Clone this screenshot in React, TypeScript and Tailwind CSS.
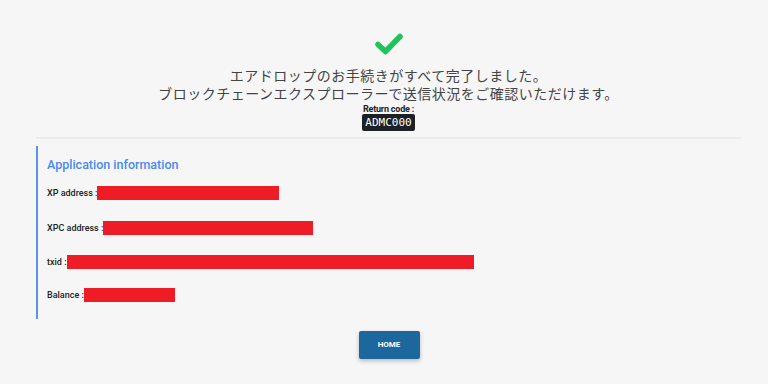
export default function App() {
    const rows = [
        { label: "XP address :", bar: "w-[182px]", gap: "mb-[21px]" },
        { label: "XPC address :", bar: "w-[210px]", gap: "mb-[20px]" },
        { label: "txid :", bar: "w-[407px]", gap: "mb-[19px]" },
        { label: "Balance :", bar: "w-[91px]", gap: "mb-0" },
    ];

    return (
        <div className="min-h-[384px] w-full bg-[#f6f6f6] font-['Roboto','Noto_Sans_CJK_JP',sans-serif] text-[#333]">
            <div className="ml-[36px] w-[705px] pt-[32px]">
                {/* success header */}
                <div className="flex flex-col items-center">
                    <svg width="30" height="24" viewBox="0 0 30 24" className="block">
                        <path d="M4 12.5 L11.5 19.5 L26 4.5" fill="none" stroke="#1ec35a" strokeWidth="5.5" strokeLinecap="round" strokeLinejoin="round" />
                    </svg>
                    <p className="mt-[10px] text-center text-[14px] leading-[18px] tracking-[0.5px] text-[#444] font-['Noto_Sans_CJK_JP',sans-serif]">
                        エアドロップのお手続きがすべて完了しました。
                        <br />
                        ブロックチェーンエクスプローラーで送信状況をご確認いただけます。
                    </p>
                    <div className="mt-[2px] text-[9px] leading-[10px] font-bold text-[#222] tracking-[-0.2px]">Return code :</div>
                    <div className="rounded-[2px] bg-[#1d2125] px-[3px] py-[1px] font-['DejaVu_Sans_Mono',monospace] text-[11px] leading-[15px] text-white">
                        ADMC000
                    </div>
                </div>

                <div className="mt-[6px] h-[2px] bg-[#ebebeb]" />

                {/* application info */}
                <div className="mt-[7px] border-l-2 border-[#5b92f0] pl-[9px] pt-[11px] pb-[17px]">
                    <h2 className="text-[12.5px] leading-[16px] font-medium text-[#4b89f2]">Application information</h2>
                    <div className="mt-[13px]">
                        {rows.map((r) => (
                            <div key={r.label} className={`flex items-center ${r.gap}`}>
                                <span className="text-[9px] font-medium text-[#222] leading-[13px]">{r.label}</span>
                                <span className={`${r.bar} h-[14px] bg-[#ee1c25]`} />
                            </div>
                        ))}
                    </div>
                </div>

                <div className="mt-[12px] flex justify-center pl-[1px]">
                    <button className="h-[28px] w-[61px] rounded-[2px] bg-[#1d679f] text-[8px] font-bold text-white shadow-[0_2px_4px_rgba(0,0,0,0.25)]">
                        HOME
                    </button>
                </div>
            </div>
        </div>
    );
}
